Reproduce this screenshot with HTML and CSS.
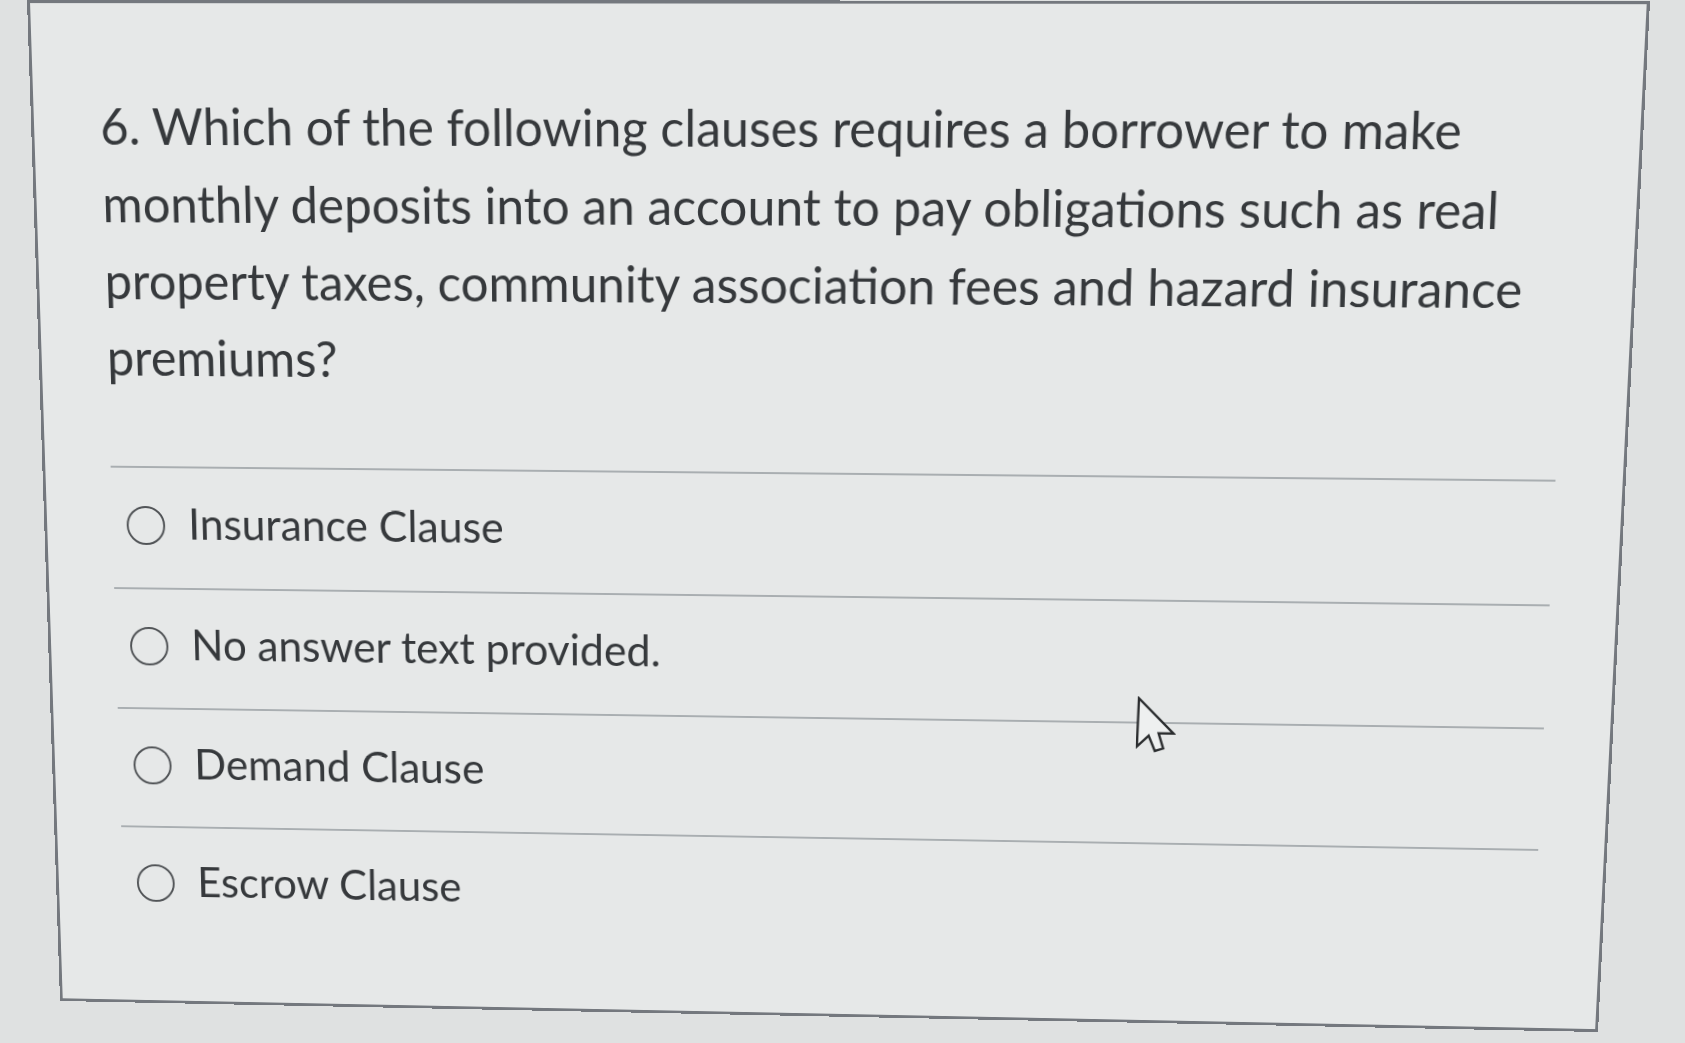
FILE: index.html
```html
<!DOCTYPE html>
<html lang="en">
<head>
<meta charset="utf-8">
<title>Quiz question 6</title>
<link rel="stylesheet" href="styles.css">
</head>
<body>
<div class="card">
  <p class="question">6. Which of the following clauses requires a borrower to make monthly deposits into an account to pay obligations such as real property taxes, community association fees and hazard insurance premiums?</p>
  <div class="answers">
    <label class="option"><span class="radio"></span><span class="opt-label">Insurance Clause</span></label>
    <label class="option"><span class="radio"></span><span class="opt-label">No answer text provided.</span></label>
    <label class="option"><span class="radio"></span><span class="opt-label">Demand Clause</span></label>
    <label class="option"><span class="radio"></span><span class="opt-label">Escrow Clause</span></label>
  </div>
  <svg class="cursor" width="40" height="58" viewBox="-2 -2 40 58" aria-hidden="true">
    <path d="M0 0 L-1 49.7 L10.7 38.3 L17.3 54 L25.7 51.3 L20.7 35.7 L35.7 35.7 Z" fill="#eef0f0" stroke="#2b2d2f" stroke-width="2.4" stroke-linejoin="miter"/>
  </svg>
</div>
</body>
</html>
```

FILE: styles.css
```css
html, body {
  margin: 0;
  padding: 0;
  width: 1685px;
  height: 1043px;
  overflow: hidden;
  background: #dfe1e1;
}

.card {
  position: relative;
  box-sizing: border-box;
  width: 1600px;
  height: 1030px;
  padding: 0 66px 0 67.5px;
  background: #e6e8e8;
  border: 3px solid #74787e;
  font-family: Lato, "Open Sans", "Liberation Sans", sans-serif;
  color: #36393c;
  transform-origin: 0 0;
  transform: matrix3d(0.982688, 0.000606, 0, -0.0000192056, 0.035198, 1.024544, 0, 0.0000526485, 0, 0, 1, 0, 27, 0, 0, 1);
}

.question {
  margin: 0 0 72px 0;
  padding-top: 82px;
  font-size: 50px;
  line-height: 77px;
}

.answers {
  display: flex;
  flex-direction: column;
}

.option {
  box-sizing: border-box;
  height: 125px;
  display: flex;
  align-items: center;
  padding-bottom: 6px;
  border-top: 2px solid #a9aeb1;
}

.radio {
  box-sizing: border-box;
  flex: none;
  width: 40px;
  height: 40px;
  margin-left: 15.5px;
  border: 2.5px solid #505356;
  border-radius: 50%;
}

.opt-label {
  margin-left: 24px;
  padding-bottom: 6px;
  font-size: 44px;
  line-height: 50px;
}

.cursor {
  position: absolute;
  left: 1119px;
  top: 686px;
}
```
